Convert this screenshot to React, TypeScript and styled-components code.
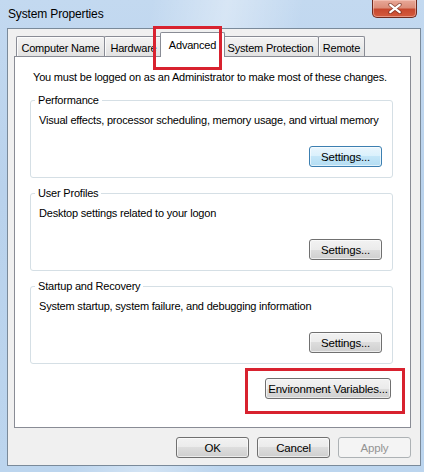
import React from "react";
import styled, { createGlobalStyle } from "styled-components";

const GlobalStyle = createGlobalStyle`
  html, body { margin: 0; padding: 0; }
  body {
    width: 424px;
    height: 472px;
    overflow: hidden;
    font-family: "Liberation Sans", Arial, sans-serif;
    font-size: 11px;
    letter-spacing: -0.2px;
    color: #000;
  }
  * { box-sizing: border-box; }
`;

const Window = styled.div`
  width: 424px;
  height: 472px;
  display: flex;
  flex-direction: column;
  background:
    linear-gradient(100deg, rgba(255,255,255,0) 30%, rgba(255,255,255,0.35) 45%, rgba(255,255,255,0) 60%),
    linear-gradient(180deg, #c3d9f0 0%, #b9d2ec 40%, #bcd5ee 100%);
`;

const TitleBar = styled.div`
  height: 28px;
  flex-shrink: 0;
  display: flex;
  justify-content: space-between;
  align-items: flex-start;
  padding: 0 7px 0 8px;
`;

const Title = styled.div`
  font-size: 12px;
  line-height: 15px;
  margin-top: 7px;
  letter-spacing: -0.15px;
`;

const CloseButton = styled.div`
  width: 45px;
  height: 18px;
  display: flex;
  align-items: center;
  justify-content: center;
  border: 1px solid #6e2a1f;
  border-top: none;
  border-radius: 0 0 5px 5px;
  background: linear-gradient(180deg, #e8a898 0%, #dc8e7a 45%, #c7482e 55%, #d45a3d 100%);
  box-shadow: inset 0 0 0 1px rgba(255, 220, 210, 0.45);
`;

const Client = styled.div`
  flex: 1;
  margin: 0 3px 6px 7px;
  border: 1px solid #7a8a9a;
  background: #f0f0f0;
  display: flex;
  flex-direction: column;
  padding: 3px 9px 7px 6px;
`;

const TabStrip = styled.div`
  height: 24px;
  display: flex;
  align-items: flex-end;
  padding-left: 2px;
`;

const Tab = styled.div<{ $w: number; $selected?: boolean }>`
  position: relative;
  width: ${(p) => p.$w}px;
  height: ${(p) => (p.$selected ? 25 : 20)}px;
  margin-left: ${(p) => (p.$selected ? -3 : -1)}px;
  margin-right: ${(p) => (p.$selected ? -2 : 0)}px;
  margin-bottom: ${(p) => (p.$selected ? -1 : 0)}px;
  z-index: ${(p) => (p.$selected ? 2 : 1)};
  border: 1px solid #898c95;
  border-bottom: none;
  border-radius: 2px 2px 0 0;
  background: ${(p) =>
    p.$selected ? "#ffffff" : "linear-gradient(180deg, #f3f3f3 0%, #ebebeb 50%, #e2e2e2 100%)"};
  box-shadow: ${(p) => (p.$selected ? "none" : "inset 1px 1px 0 #fcfcfc")};
  display: flex;
  justify-content: center;
  align-items: center;
  padding-top: ${(p) => (p.$selected ? 0 : 2)}px;
  font-size: 11px;
  white-space: nowrap;
  &:first-child { margin-left: 0; }
`;

const Highlight = styled.div<{ $l: number; $t: number; $w: number; $h: number }>`
  position: absolute;
  left: ${(p) => p.$l}px;
  top: ${(p) => p.$t}px;
  width: ${(p) => p.$w}px;
  height: ${(p) => p.$h}px;
  border: 3px solid #d8222f;
  pointer-events: none;
  z-index: 5;
`;

const Panel = styled.div`
  height: 372px;
  flex-shrink: 0;
  background: #ffffff;
  border: 1px solid #898c95;
  padding: 13px 17px 0 15px;
  display: flex;
  flex-direction: column;
`;

const Notice = styled.div`
  line-height: 15px;
  margin-left: 3px;
  white-space: nowrap;
`;

const Group = styled.fieldset`
  margin: 8px 0 0 0;
  border: 1px solid #d5dfe5;
  border-radius: 3px;
  padding: 5px 10px 10px 8px;
  min-width: 0;
`;

const Legend = styled.legend`
  padding: 0 3px;
  margin-left: -4px;
  line-height: 15px;
`;

const Description = styled.div`
  line-height: 15px;
  margin-bottom: 18px;
  white-space: nowrap;
`;

const ButtonRow = styled.div<{ $gap?: number; $mt?: number; $mr?: number }>`
  display: flex;
  justify-content: flex-end;
  gap: ${(p) => p.$gap ?? 0}px;
  margin-top: ${(p) => p.$mt ?? 0}px;
  margin-right: ${(p) => p.$mr ?? 0}px;
`;

const Button = styled.div<{ $w?: number; $variant?: "default" | "normal" | "disabled" }>`
  position: relative;
  width: ${(p) => p.$w ?? 73}px;
  height: 21px;
  border-radius: 3px;
  display: flex;
  align-items: center;
  justify-content: center;
  font-size: 11.5px;
  white-space: nowrap;
  border: 1px solid
    ${(p) => (p.$variant === "default" ? "#3c7fb1" : p.$variant === "disabled" ? "#adb2b5" : "#707070")};
  color: ${(p) => (p.$variant === "disabled" ? "#939393" : "#000")};
  background: ${(p) =>
    p.$variant === "default"
      ? "linear-gradient(180deg, #eaf6fd 0%, #d9f0fc 50%, #c4e6f8 50%, #b3ddf3 100%)"
      : p.$variant === "disabled"
      ? "#f4f4f4"
      : "linear-gradient(180deg, #f2f2f2 0%, #ebebeb 50%, #dddddd 50%, #cfcfcf 100%)"};
  box-shadow: inset 0 0 0 1px rgba(255, 255, 255, ${(p) => (p.$variant === "disabled" ? 0 : 0.6)});
`;

const Footer = styled(ButtonRow)`
  margin-top: 9px;
`;

const CloseIcon = () => (
  <svg width="14" height="11" viewBox="0 0 14 11">
    <path d="M2 1.5 L12 9.5 M12 1.5 L2 9.5" stroke="#5a2017" strokeWidth="3.6" strokeLinecap="round" opacity="0.55" />
    <path d="M2.3 1.8 L11.7 9.2 M11.7 1.8 L2.3 9.2" stroke="#ffffff" strokeWidth="2.2" strokeLinecap="round" />
  </svg>
);

type GroupData = { title: string; text: string; def?: boolean };

const groups: GroupData[] = [
  { title: "Performance", text: "Visual effects, processor scheduling, memory usage, and virtual memory", def: true },
  { title: "User Profiles", text: "Desktop settings related to your logon" },
  { title: "Startup and Recovery", text: "System startup, system failure, and debugging information" },
];

const tabs = [
  { label: "Computer Name", w: 89 },
  { label: "Hardware", w: 59 },
  { label: "Advanced", w: 65, selected: true },
  { label: "System Protection", w: 97 },
  { label: "Remote", w: 47 },
];

export default function App() {
  return (
    <>
      <GlobalStyle />
      <Window>
        <TitleBar>
          <Title>System Properties</Title>
          <CloseButton>
            <CloseIcon />
          </CloseButton>
        </TitleBar>
        <Client>
          <TabStrip>
            {tabs.map((t) => (
              <Tab key={t.label} $w={t.w} $selected={t.selected}>
                {t.label}
                {t.selected && <Highlight $l={-8} $t={-7} $w={69} $h={44} />}
              </Tab>
            ))}
          </TabStrip>
          <Panel>
            <Notice>You must be logged on as an Administrator to make most of these changes.</Notice>
            {groups.map((g) => (
              <Group key={g.title}>
                <Legend>{g.title}</Legend>
                <Description>{g.text}</Description>
                <ButtonRow>
                  <Button $variant={g.def ? "default" : "normal"}>Settings...</Button>
                </ButtonRow>
              </Group>
            ))}
            <ButtonRow $mt={14} $mr={2}>
              <Button $w={126}>
                Environment Variables...
                <Highlight $l={-21} $t={-11} $w={160} $h={46} />
              </Button>
            </ButtonRow>
          </Panel>
          <Footer $gap={8}>
            <Button>OK</Button>
            <Button>Cancel</Button>
            <Button $variant="disabled">Apply</Button>
          </Footer>
        </Client>
      </Window>
    </>
  );
}
